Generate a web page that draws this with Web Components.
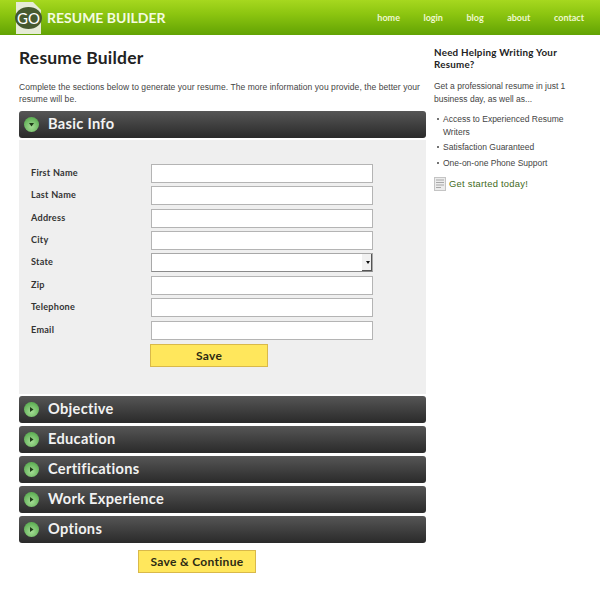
<!DOCTYPE html>
<html lang="en">
<head>
<meta charset="utf-8">
<title>Resume Builder</title>
<style>
    html, body { margin: 0; padding: 0; background: #fff; }
    body { font-family: "Lato", "DejaVu Sans", sans-serif; color: #333; }
</style>
</head>
<body>
<site-header>
    <nav-link>home</nav-link>
    <nav-link>login</nav-link>
    <nav-link>blog</nav-link>
    <nav-link>about</nav-link>
    <nav-link>contact</nav-link>
</site-header>
<page-layout>
    <main-intro heading="Resume Builder">Complete the sections below to generate your resume. The more information you provide, the better your resume will be.</main-intro>
    <section-bar label="Basic Info" open></section-bar>
    <form-panel>
        <form-row label="First Name"></form-row>
        <form-row label="Last Name"></form-row>
        <form-row label="Address"></form-row>
        <form-row label="City"></form-row>
        <form-row label="State" type="select"></form-row>
        <form-row label="Zip"></form-row>
        <form-row label="Telephone"></form-row>
        <form-row label="Email"></form-row>
        <yellow-button slot="action">Save</yellow-button>
    </form-panel>
    <section-bar label="Objective"></section-bar>
    <section-bar label="Education"></section-bar>
    <section-bar label="Certifications"></section-bar>
    <section-bar label="Work Experience"></section-bar>
    <section-bar label="Options"></section-bar>
    <yellow-button slot="footer">Save &amp; Continue</yellow-button>
    <side-promo slot="side" heading="Need Helping Writing Your Resume?"></side-promo>
</page-layout>
<script>
class SiteHeader extends HTMLElement {
    constructor() {
        super();
        this.attachShadow({ mode: 'open' });
        this.shadowRoot.innerHTML = `
            <style>
                :host {
                    align-items: center;
                    background: linear-gradient(#a6d81f 0, #8cc510 40%, #62a304 100%);
                    box-sizing: border-box;
                    display: flex;
                    height: 35px;
                    justify-content: space-between;
                    padding: 0 16px 0 15px;
                }
                .logo { align-items: center; display: flex; }
                svg { display: block; }
                .logo-text { fill: #fff; font: 400 15px "Lato", sans-serif; }
                .name {
                    color: #f4fbe0;
                    font: 700 14px "Lato", sans-serif;
                    margin-left: 4px;
                    white-space: nowrap;
                }
                nav { display: flex; gap: 23.5px; }
            </style>
            <div class="logo">
                <svg width="28" height="32" viewBox="0 0 28 32" aria-hidden="true">
                    <path d="M1 0H18L26 8V32H1Z" fill="#e6ebd6"/>
                    <ellipse cx="13.5" cy="16" rx="13.5" ry="11" fill="#46592f"/>
                    <text class="logo-text" x="13.5" y="21.5" text-anchor="middle">GO</text>
                </svg>
                <span class="name">RESUME BUILDER</span>
            </div>
            <nav><slot></slot></nav>
        `;
    }
}

class NavLink extends HTMLElement {
    constructor() {
        super();
        this.attachShadow({ mode: 'open' });
        this.shadowRoot.innerHTML = `
            <style>
                :host {
                    color: #eef8cf;
                    display: block;
                    font: 700 9px "Lato", sans-serif;
                }
            </style>
            <slot></slot>
        `;
    }
}

class PageLayout extends HTMLElement {
    constructor() {
        super();
        this.attachShadow({ mode: 'open' });
        this.shadowRoot.innerHTML = `
            <style>
                :host {
                    display: grid;
                    grid-template-columns: 407px 147px;
                    column-gap: 8px;
                    padding: 0 19px;
                }
                .main { display: flex; flex-direction: column; }
                .footer { display: flex; margin-top: 4px; padding-left: 119px; }
            </style>
            <div class="main">
                <slot></slot>
                <div class="footer"><slot name="footer"></slot></div>
            </div>
            <div class="side"><slot name="side"></slot></div>
        `;
    }
}

class MainIntro extends HTMLElement {
    constructor() {
        super();
        this.attachShadow({ mode: 'open' });
    }

    connectedCallback() {
        this.shadowRoot.innerHTML = `
            <style>
                :host { display: block; }
                h1 {
                    color: #222;
                    font: 700 17.5px/24px "Lato", sans-serif;
                    letter-spacing: 0.2px;
                    margin: 11px 0 0;
                }
                p {
                    color: #444;
                    font: 400 8.5px/12px "Liberation Sans", sans-serif;
                    letter-spacing: 0.06px;
                    margin: 11px 0 6px;
                }
            </style>
            <h1>${this.getAttribute('heading')}</h1>
            <p><slot></slot></p>
        `;
    }
}

class SectionBar extends HTMLElement {
    constructor() {
        super();
        this.attachShadow({ mode: 'open' });
    }

    connectedCallback() {
        const open = this.hasAttribute('open');
        const arrow = open ? 'M-2.5 -1.5H2.5L0 2Z' : 'M-1.5 -2.5V2.5L2 0Z';
        this.shadowRoot.innerHTML = `
            <style>
                :host {
                    align-items: center;
                    background: linear-gradient(#565656 0, #424242 45%, #2a2a2a 100%);
                    border-radius: 3px;
                    box-sizing: border-box;
                    color: #f2f2f2;
                    display: flex;
                    font: 700 14.6px "Lato", sans-serif;
                    height: 27px;
                    letter-spacing: 0.3px;
                    margin-bottom: 3px;
                    padding-left: 5px;
                }
                svg { display: block; margin-right: 9px; }
                span { position: relative; top: -1px; }
            </style>
            <svg width="15" height="15" viewBox="-7.5 -7.5 15 15" aria-hidden="true">
                <defs>
                    <radialGradient id="ball" cx="50%" cy="65%" r="60%">
                        <stop offset="0" stop-color="#a5dc95"/>
                        <stop offset="1" stop-color="#5fb055"/>
                    </radialGradient>
                </defs>
                <circle r="7.5" fill="url(#ball)"/>
                <path d="${arrow}" fill="#1d3a18"/>
            </svg>
            <span>${this.getAttribute('label')}</span>
        `;
    }
}

class FormPanel extends HTMLElement {
    constructor() {
        super();
        this.attachShadow({ mode: 'open' });
        this.shadowRoot.innerHTML = `
            <style>
                :host {
                    background: #efefef;
                    box-sizing: border-box;
                    display: block;
                    height: 254px;
                    margin: -1px 0 2px;
                    padding: 23px 0 0 12px;
                }
                .action { margin: 2px 0 0 119px; }
            </style>
            <slot></slot>
            <div class="action"><slot name="action"></slot></div>
        `;
    }
}

class FormRow extends HTMLElement {
    constructor() {
        super();
        this.attachShadow({ mode: 'open' });
    }

    connectedCallback() {
        const isSelect = this.getAttribute('type') === 'select';
        this.shadowRoot.innerHTML = `
            <style>
                :host {
                    align-items: center;
                    display: grid;
                    grid-template-columns: 120px 222px;
                    height: 22.43px;
                }
                label {
                    color: #333;
                    font: 700 9.1px "Lato", sans-serif;
                    letter-spacing: 0.25px;
                    position: relative;
                    top: -2px;
                }
                .box {
                    background: #fff;
                    border: 1px solid #b4b4b4;
                    box-sizing: border-box;
                    display: block;
                    height: 19px;
                    margin: 0;
                    padding: 0;
                    position: relative;
                    top: -1px;
                    width: 222px;
                }
                .select { border-color: #a8a8a8; border-bottom-color: #8a8a8a; }
                .select::after {
                    background: #f1f1f1;
                    border-bottom: 1px solid #555;
                    border-right: 1px solid #555;
                    bottom: 0;
                    content: "";
                    position: absolute;
                    right: 0;
                    top: 0;
                    width: 9px;
                }
                .select::before {
                    border-left: 2.5px solid transparent;
                    border-right: 2.5px solid transparent;
                    border-top: 3px solid #111;
                    content: "";
                    position: absolute;
                    right: 2px;
                    top: 7px;
                    z-index: 1;
                }
            </style>
            <label>${this.getAttribute('label')}</label>
            ${isSelect ? '<div class="box select"></div>' : '<input class="box" type="text">'}
        `;
    }
}

class YellowButton extends HTMLElement {
    constructor() {
        super();
        this.attachShadow({ mode: 'open' });
        this.shadowRoot.innerHTML = `
            <style>
                :host {
                    align-items: center;
                    background: #ffe75c;
                    border: 1px solid #d9b94a;
                    box-sizing: border-box;
                    color: #2c2a14;
                    display: flex;
                    font: 700 12px "Lato", sans-serif;
                    height: 23px;
                    justify-content: center;
                    letter-spacing: 0.3px;
                    width: 118px;
                }
            </style>
            <slot></slot>
        `;
    }
}

class SidePromo extends HTMLElement {
    constructor() {
        super();
        this.attachShadow({ mode: 'open' });
    }

    connectedCallback() {
        this.shadowRoot.innerHTML = `
            <style>
                :host { color: #444; display: block; font: 400 8.5px/12px "Liberation Sans", sans-serif; letter-spacing: 0; }
                h2 {
                    color: #222;
                    font: 700 9.8px/12px "Lato", sans-serif;
                    letter-spacing: 0.25px;
                    margin: 11px 0 0;
                }
                p { line-height: 12.5px; margin: 10px 0 0; }
                ul { list-style: none; margin: 8px 0 0; padding: 0 0 0 9px; }
                li { line-height: 12.5px; margin-bottom: 3px; padding-right: 4px; position: relative; }
                li::before {
                    background: #444;
                    border-radius: 50%;
                    content: "";
                    height: 2px;
                    left: -6px;
                    position: absolute;
                    top: 5px;
                    width: 2px;
                }
                .cta { align-items: center; color: #3f6a1c; display: flex; font-size: 9.4px; letter-spacing: 0.25px; margin-top: 8px; }
                svg { display: block; margin-right: 3px; }
            </style>
            <h2>${this.getAttribute('heading')}</h2>
            <p>Get a professional resume in just 1 business day, as well as...</p>
            <ul>
                <li>Access to Experienced Resume Writers</li>
                <li>Satisfaction Guaranteed</li>
                <li>One-on-one Phone Support</li>
            </ul>
            <div class="cta">
                <svg width="12" height="14" viewBox="0 0 12 14" aria-hidden="true">
                    <rect x="0.5" y="0.5" width="11" height="13" fill="#ececec" stroke="#c4c4c4"/>
                    <path d="M2 3H10M2 5.5H10M2 8H10M2 10.5H7" stroke="#a8a8a8"/>
                </svg>
                <span>Get started today!</span>
            </div>
        `;
    }
}

customElements.define('site-header', SiteHeader);
customElements.define('nav-link', NavLink);
customElements.define('page-layout', PageLayout);
customElements.define('main-intro', MainIntro);
customElements.define('section-bar', SectionBar);
customElements.define('form-panel', FormPanel);
customElements.define('form-row', FormRow);
customElements.define('yellow-button', YellowButton);
customElements.define('side-promo', SidePromo);
</script>
</body>
</html>
